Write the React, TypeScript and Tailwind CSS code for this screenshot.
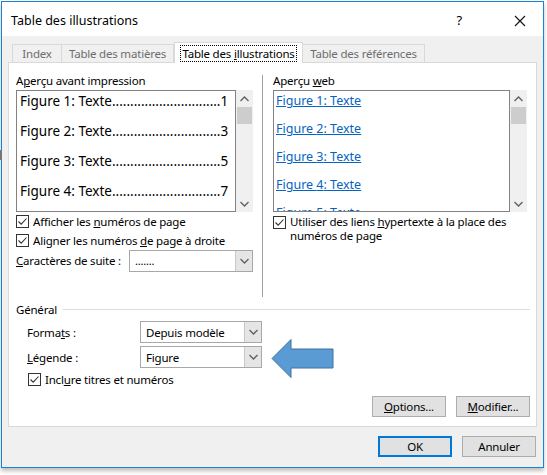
import React from "react";

const Chevron = ({ up = false }: { up?: boolean }) => (
  <svg width="9" height="6" viewBox="0 0 9 6" className="block">
    <path d={up ? "M0.5 5 L4.5 1 L8.5 5" : "M0.5 1 L4.5 5 L8.5 1"} fill="none" stroke="#606060" strokeWidth="1.3" />
  </svg>
);

const Check = () => (
  <span className="w-[13px] h-[13px] border border-[#333] bg-white flex items-center justify-center shrink-0">
    <svg width="11" height="11" viewBox="0 0 11 11">
      <path d="M1.5 5.5 L4.2 8.2 L9.5 2.5" fill="none" stroke="#333" strokeWidth="1.1" />
    </svg>
  </span>
);

const Scrollbar = () => (
  <div className="w-[17px] bg-[#f0f0f0] flex flex-col items-center">
    <div className="h-[17px] flex items-center justify-center"><Chevron up /></div>
    <div className="w-[15px] h-[17px] bg-[#cdcdcd]" />
    <div className="flex-1" />
    <div className="h-[17px] flex items-center justify-center"><Chevron /></div>
  </div>
);

const Combo = ({ text, w, dots = false }: { text: string; w: string; dots?: boolean }) => (
  <div className={`${w} h-[22px] border border-[#a8a8a8] bg-white flex shrink-0`}>
    <div className={`flex-1 flex items-center pl-[5px] ${dots ? "text-[11px]" : ""}`}>{text}</div>
    <div className="w-[17px] bg-[#e5e5e5] border-l border-[#c8c8c8] flex items-center justify-center">
      <Chevron />
    </div>
  </div>
);

const Btn = ({ children, primary = false }: { children: React.ReactNode; primary?: boolean }) => (
  <div
    className={`w-[74px] h-[21px] flex items-center justify-center bg-[#e1e1e1] ${
      primary ? "border-2 border-[#0078d7]" : "border border-[#adadad]"
    }`}
  >
    {children}
  </div>
);

const DOTS = "..............................";

export default function App() {
  const font = { fontFamily: '"Noto Sans", "Open Sans", sans-serif' };
  return (
    <div className="w-[547px] h-[475px] bg-white relative overflow-hidden text-[11.5px] tracking-[-0.2px] text-black" style={font}>
      <div className="absolute left-0 top-[150px] w-[2px] h-[10px] bg-[#777]" />
      <div className="ml-[1px] mt-[1px] w-[543px] h-[467px] border border-[#1883d7] bg-[#f0f0f0] flex flex-col shadow-[0_3px_4px_rgba(0,0,0,0.25)]">
        {/* title bar */}
        <div className="h-[34px] bg-white flex items-center pl-[9px] pt-[4px] shrink-0">
          <span className="text-[12.5px] tracking-normal">Table des illustrations</span>
          <span className="ml-auto mr-[52px] text-[13px]">?</span>
          <svg width="12" height="12" viewBox="0 0 12 12" className="mr-[17px]">
            <path d="M1 1 L11 11 M11 1 L1 11" stroke="#111" strokeWidth="1.1" />
          </svg>
        </div>
        {/* tabs */}
        <div className="h-[26px] flex items-end pl-[10px] shrink-0">
          <div className="h-[18px] w-[50px] border border-b-0 border-[#d9d9d9] flex items-center justify-center text-[#6d6d6d]">Index</div>
          <div className="h-[18px] w-[112px] border border-b-0 border-l-0 border-[#d9d9d9] flex items-center justify-center text-[#6d6d6d]">Table des matières</div>
          <div className="h-[21px] w-[129px] bg-white border border-b-0 border-[#d9d9d9] flex items-center justify-center -mb-px relative z-10">
            <span className="border border-dotted border-black px-[1px] leading-[15px]">
              Table des <span className="underline">i</span>llustrations
            </span>
          </div>
          <div className="h-[18px] w-[122px] border border-b-0 border-l-0 border-[#d9d9d9] flex items-center justify-center text-[#6d6d6d]">Table des références</div>
        </div>
        {/* panel */}
        <div className="mx-[6px] h-[365px] bg-white border border-[#d9d9d9] flex flex-col shrink-0">
          <div className="flex h-[232px] pt-[10px]">
            {/* left column */}
            <div className="w-[253px] pl-[7px] flex flex-col">
              <div className="leading-[15px]">A<span className="underline">p</span>erçu avant impression</div>
              <div className="mt-[2px] flex h-[122px]">
                <div className="w-[220px] border border-[#828282] pl-[3px] text-[13.5px] tracking-normal leading-[30px] overflow-hidden">
                  <div className="-mt-[5px]">
                    {["1", "3", "5", "7"].map((n, i) => (
                      <div key={n} className="whitespace-nowrap">
                        {`Figure ${i + 1}: Texte${DOTS}${n}`}
                      </div>
                    ))}
                  </div>
                </div>
                <Scrollbar />
              </div>
              <div className="mt-[1px] flex items-center gap-[4px] h-[17px]">
                <Check />
                <span>Afficher les <span className="underline">n</span>uméros de page</span>
              </div>
              <div className="mt-[2px] flex items-center gap-[4px] h-[17px]">
                <Check />
                <span>Aligner les numéros <span className="underline">d</span>e page à droite</span>
              </div>
              <div className="mt-[1px] flex items-center">
                <span className="w-[113px] whitespace-nowrap"><span className="underline">C</span>aractères de suite :</span>
                <Combo text="......." w="w-[124px]" dots />
              </div>
            </div>
            {/* divider */}
            <div className="w-px bg-[#a0a0a0] mt-[2px] h-[222px]" />
            {/* right column */}
            <div className="flex-1 pl-[10px] flex flex-col">
              <div className="leading-[15px]">Aperçu <span className="underline">w</span>eb</div>
              <div className="mt-[2px] flex h-[122px]">
                <div className="w-[237px] border border-[#828282] pl-[2px] text-[12.5px] tracking-normal leading-[28px] text-[#0563c1] overflow-hidden">
                  <div className="-mt-[4px]">
                    {[1, 2, 3, 4, 5].map((n) => (
                      <div key={n} className="underline whitespace-nowrap">Figure {n}: Texte</div>
                    ))}
                  </div>
                </div>
                <Scrollbar />
              </div>
              <div className="mt-[3px] flex items-start gap-[4px]">
                <div className="mt-[1px]"><Check /></div>
                <span className="leading-[14px]">
                  Utiliser des liens <span className="underline">h</span>ypertexte à la place des<br />numéros de page
                </span>
              </div>
            </div>
          </div>
          {/* general */}
          <div className="pl-[7px] pr-[6px] mt-[6px] flex items-center">
            <span>Général</span>
            <div className="flex-1 h-px bg-[#dcdcdc] ml-[6px]" />
          </div>
          <div className="pl-[18px] mt-[3px] flex items-center">
            <span className="w-[113px]">Forma<span className="underline">t</span>s :</span>
            <Combo text="Depuis modèle" w="w-[122px]" />
          </div>
          <div className="pl-[18px] mt-[3px] flex items-center relative">
            <span className="w-[113px]"><span className="underline">L</span>égende :</span>
            <Combo text="Figure" w="w-[122px]" />
            <svg width="64" height="42" viewBox="0 0 64 42" className="absolute left-[262px] -top-[8px]">
              <path d="M1 20.5 L20 1.5 L20 11 L62 11 L62 30 L20 30 L20 39.5 Z" fill="#5b9bd5" stroke="#41719c" strokeWidth="1" />
            </svg>
          </div>
          <div className="pl-[19px] mt-[3px] flex items-center gap-[4px] h-[17px]">
            <Check />
            <span>Incl<span className="underline">u</span>re titres et numéros</span>
          </div>
          <div className="mt-auto mb-[9px] flex justify-end gap-[10px] pr-[6px]">
            <Btn><span><span className="underline">O</span>ptions...</span></Btn>
            <Btn><span><span className="underline">M</span>odifier...</span></Btn>
          </div>
        </div>
        {/* footer */}
        <div className="mt-[9px] flex justify-end gap-[10px] pr-[7px]">
          <Btn primary>OK</Btn>
          <Btn>Annuler</Btn>
        </div>
      </div>
    </div>
  );
}
